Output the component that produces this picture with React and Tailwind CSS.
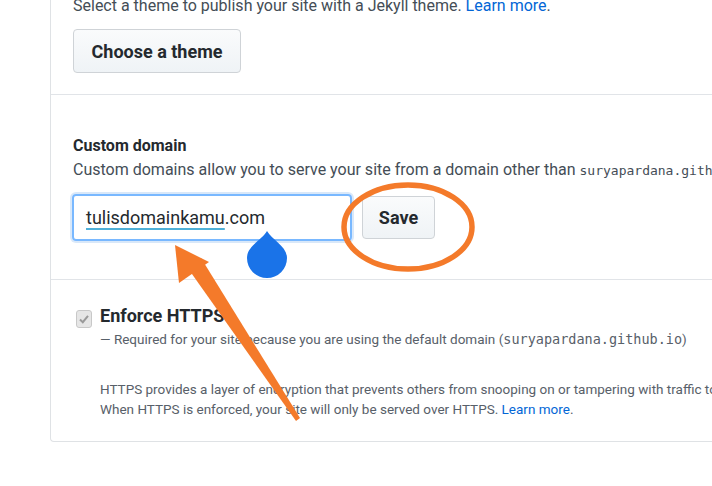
import React from "react";

const font = { fontFamily: "Roboto, 'Liberation Sans', sans-serif" };
const mono = { fontFamily: "'DejaVu Sans Mono', 'Liberation Mono', monospace" };

function Overlay() {
  return (
    <svg className="absolute left-0 top-0 pointer-events-none" width="712" height="486" viewBox="0 0 712 486">
      {/* teardrop handle */}
      <path d="M267 231 C 272 240, 287 246, 287 258 A 20 20 0 1 1 247 258 C 247 246, 262 240, 267 231 Z" fill="#1a73e8" />
      {/* ellipse */}
      <ellipse cx="408" cy="227" rx="64" ry="42" fill="none" stroke="#f47a2a" strokeWidth="5.5" />
      {/* arrow shaft */}
      <path d="M187 267 L201 258 L300 418 L296 421 Z" fill="#f47a2a" />
      {/* arrow head */}
      <path d="M175 245 L209 262 L179 283 Z" fill="#f47a2a" />
    </svg>
  );
}

export default function App() {
  return (
    <div className="relative w-[712px] h-[486px] overflow-hidden bg-white text-[#24292e]" style={font}>
      <div className="ml-[50px] w-[720px] border-l border-b border-[#dfe2e5] rounded-bl-[4px]">
        <div className="pl-[22px] pb-[21px]">
          <p className="-mt-[6px] text-[16px] leading-[24px] text-[#444d56]">
            Select a theme to publish your site with a Jekyll theme. <span className="text-[#0366d6]">Learn more</span>.
          </p>
          <button className="mt-[11px] h-[44px] w-[168px] rounded-[4px] border border-[#cfd3d7] bg-gradient-to-b from-[#fafbfc] to-[#eff3f6] text-[18px] font-bold text-[#24292e]">
            Choose a theme
          </button>
        </div>
        <div className="border-t border-[#e1e4e8] pl-[22px] pt-[41px] pb-[38px]">
          <h3 className="text-[16px] font-bold leading-[20px]">Custom domain</h3>
          <p className="mt-[4px] whitespace-nowrap text-[16px] leading-[20px] text-[#444d56]">
            Custom domains allow you to serve your site from a domain other than{" "}
            <span className="text-[13px]" style={mono}>suryapardana.github.io</span>
          </p>
          <div className="mt-[13px] flex items-center gap-[10px]">
            <div className="-ml-[1px] flex h-[47px] w-[280px] items-center rounded-[4px] border-2 border-[#79b8ff] px-[12px] shadow-[0_0_0_2px_rgba(3,102,214,0.15)]">
              <span className="text-[18px] leading-[24px] text-[#24292e]">
                <span className="underline decoration-[#4fb0d8] decoration-2 underline-offset-[4px]">tulisdomainkamu</span>.com
              </span>
            </div>
            <button className="h-[43px] w-[73px] rounded-[4px] border border-[#cfd3d7] bg-gradient-to-b from-[#fafbfc] to-[#eff3f6] text-[18px] font-bold">
              Save
            </button>
          </div>
        </div>
        <div className="border-t border-[#e1e4e8] pl-[25px] pt-[25px] pb-[22px]">
          <div className="flex items-start gap-[8px]">
            <div className="mt-[5px] flex h-[18px] w-[16px] shrink-0 items-center justify-center rounded-[3px] border border-[#c8c8c8] bg-[#e6e6e6]">
              <svg width="12" height="12" viewBox="0 0 12 12">
                <path d="M2 6.5 L4.8 9.2 L10 2.8" fill="none" stroke="#9a9a9a" strokeWidth="2" />
              </svg>
            </div>
            <div>
              <div className="text-[18px] font-bold leading-[22px]">Enforce HTTPS</div>
              <p className="mt-[2px] whitespace-nowrap text-[13.5px] leading-[20px] text-[#586069]">
                — Required for your site because you are using the default domain (
                <span className="text-[13.5px]" style={mono}>suryapardana.github.io</span>)
              </p>
              <p className="mt-[30px] whitespace-nowrap text-[13.5px] leading-[20px] text-[#586069]">
                HTTPS provides a layer of encryption that prevents others from snooping on or tampering with traffic to your site.
                <br />
                When HTTPS is enforced, your site will only be served over HTTPS. <span className="text-[#0366d6]">Learn more</span>.
              </p>
            </div>
          </div>
        </div>
      </div>
      <Overlay />
    </div>
  );
}
